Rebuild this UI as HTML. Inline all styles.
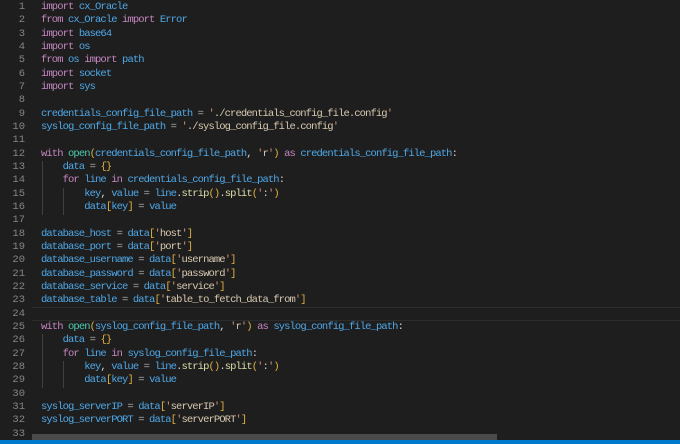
<!DOCTYPE html>
<html><head><meta charset="utf-8"><style>
html,body{margin:0;padding:0;background:#1e1e1e;width:680px;height:444px;overflow:hidden;position:relative}
.ed{position:absolute;left:0;top:1px;width:680px;font-family:"Liberation Mono",monospace;font-size:10.5px;letter-spacing:-0.9px;line-height:13.33px;color:#d4d4d4}
.l{position:relative;height:13.33px}
.n{position:absolute;left:0;width:25px;text-align:right;color:#858585;letter-spacing:0}
.c{position:absolute;left:41px;white-space:pre}
.k{color:#c586c0}.v{color:#4fa8e8}.f{color:#4ec9b0}.m{color:#dcdcaa}.s{color:#d8c8b0}.q{color:#ce9178}.o{color:#aaa}.b{color:#e0b040}
.cur{position:absolute;left:32px;right:0;top:307px;height:12px;border-top:1px solid #2c2c2c;border-bottom:1px solid #2c2c2c}
.g{position:absolute;width:1px;background:#404040}
</style></head><body>
<div class="cur"></div>
<div class="g" style="left:42px;top:161px;height:54px"></div>
<div class="g" style="left:63px;top:188px;height:27px"></div>
<div class="g" style="left:42px;top:334px;height:54px"></div>
<div class="g" style="left:63px;top:361px;height:27px"></div>
<div class="ed"><div class="l"><span class="n">1</span><span class="c"><span class="k">import</span> <span class="v">cx_Oracle</span></span></div><div class="l"><span class="n">2</span><span class="c"><span class="k">from</span> <span class="v">cx_Oracle</span> <span class="k">import</span> <span class="v">Error</span></span></div><div class="l"><span class="n">3</span><span class="c"><span class="k">import</span> <span class="v">base64</span></span></div><div class="l"><span class="n">4</span><span class="c"><span class="k">import</span> <span class="v">os</span></span></div><div class="l"><span class="n">5</span><span class="c"><span class="k">from</span> <span class="v">os</span> <span class="k">import</span> <span class="v">path</span></span></div><div class="l"><span class="n">6</span><span class="c"><span class="k">import</span> <span class="v">socket</span></span></div><div class="l"><span class="n">7</span><span class="c"><span class="k">import</span> <span class="v">sys</span></span></div><div class="l"><span class="n">8</span></div><div class="l"><span class="n">9</span><span class="c"><span class="v">credentials_config_file_path</span> <span class="o">=</span> <span class="q">'</span><span class="s">./credentials_config_file.config</span><span class="q">'</span></span></div><div class="l"><span class="n">10</span><span class="c"><span class="v">syslog_config_file_path</span> <span class="o">=</span> <span class="q">'</span><span class="s">./syslog_config_file.config</span><span class="q">'</span></span></div><div class="l"><span class="n">11</span></div><div class="l"><span class="n">12</span><span class="c"><span class="k">with</span> <span class="f">open</span><span class="b">(</span><span class="v">credentials_config_file_path</span>, <span class="q">'</span><span class="s">r</span><span class="q">'</span><span class="b">)</span> <span class="k">as</span> <span class="v">credentials_config_file_path</span>:</span></div><div class="l"><span class="n">13</span><span class="c">    <span class="v">data</span> <span class="o">=</span> <span class="b">{}</span></span></div><div class="l"><span class="n">14</span><span class="c">    <span class="k">for</span> <span class="v">line</span> <span class="k">in</span> <span class="v">credentials_config_file_path</span>:</span></div><div class="l"><span class="n">15</span><span class="c">        <span class="v">key</span>, <span class="v">value</span> <span class="o">=</span> <span class="v">line</span>.<span class="m">strip</span><span class="b">()</span>.<span class="m">split</span><span class="b">(</span><span class="q">'</span><span class="s">:</span><span class="q">'</span><span class="b">)</span></span></div><div class="l"><span class="n">16</span><span class="c">        <span class="v">data</span><span class="b">[</span><span class="v">key</span><span class="b">]</span> <span class="o">=</span> <span class="v">value</span></span></div><div class="l"><span class="n">17</span></div><div class="l"><span class="n">18</span><span class="c"><span class="v">database_host</span> <span class="o">=</span> <span class="v">data</span><span class="b">[</span><span class="q">'</span><span class="s">host</span><span class="q">'</span><span class="b">]</span></span></div><div class="l"><span class="n">19</span><span class="c"><span class="v">database_port</span> <span class="o">=</span> <span class="v">data</span><span class="b">[</span><span class="q">'</span><span class="s">port</span><span class="q">'</span><span class="b">]</span></span></div><div class="l"><span class="n">20</span><span class="c"><span class="v">database_username</span> <span class="o">=</span> <span class="v">data</span><span class="b">[</span><span class="q">'</span><span class="s">username</span><span class="q">'</span><span class="b">]</span></span></div><div class="l"><span class="n">21</span><span class="c"><span class="v">database_password</span> <span class="o">=</span> <span class="v">data</span><span class="b">[</span><span class="q">'</span><span class="s">password</span><span class="q">'</span><span class="b">]</span></span></div><div class="l"><span class="n">22</span><span class="c"><span class="v">database_service</span> <span class="o">=</span> <span class="v">data</span><span class="b">[</span><span class="q">'</span><span class="s">service</span><span class="q">'</span><span class="b">]</span></span></div><div class="l"><span class="n">23</span><span class="c"><span class="v">database_table</span> <span class="o">=</span> <span class="v">data</span><span class="b">[</span><span class="q">'</span><span class="s">table_to_fetch_data_from</span><span class="q">'</span><span class="b">]</span></span></div><div class="l"><span class="n">24</span></div><div class="l"><span class="n">25</span><span class="c"><span class="k">with</span> <span class="f">open</span><span class="b">(</span><span class="v">syslog_config_file_path</span>, <span class="q">'</span><span class="s">r</span><span class="q">'</span><span class="b">)</span> <span class="k">as</span> <span class="v">syslog_config_file_path</span>:</span></div><div class="l"><span class="n">26</span><span class="c">    <span class="v">data</span> <span class="o">=</span> <span class="b">{}</span></span></div><div class="l"><span class="n">27</span><span class="c">    <span class="k">for</span> <span class="v">line</span> <span class="k">in</span> <span class="v">syslog_config_file_path</span>:</span></div><div class="l"><span class="n">28</span><span class="c">        <span class="v">key</span>, <span class="v">value</span> <span class="o">=</span> <span class="v">line</span>.<span class="m">strip</span><span class="b">()</span>.<span class="m">split</span><span class="b">(</span><span class="q">'</span><span class="s">:</span><span class="q">'</span><span class="b">)</span></span></div><div class="l"><span class="n">29</span><span class="c">        <span class="v">data</span><span class="b">[</span><span class="v">key</span><span class="b">]</span> <span class="o">=</span> <span class="v">value</span></span></div><div class="l"><span class="n">30</span></div><div class="l"><span class="n">31</span><span class="c"><span class="v">syslog_serverIP</span> <span class="o">=</span> <span class="v">data</span><span class="b">[</span><span class="q">'</span><span class="s">serverIP</span><span class="q">'</span><span class="b">]</span></span></div><div class="l"><span class="n">32</span><span class="c"><span class="v">syslog_serverPORT</span> <span class="o">=</span> <span class="v">data</span><span class="b">[</span><span class="q">'</span><span class="s">serverPORT</span><span class="q">'</span><span class="b">]</span></span></div><div class="l"><span class="n">33</span></div></div>
<div style="position:absolute;left:32px;width:465px;top:434px;height:6px;background:#4a4a4a"></div>
<div style="position:absolute;left:0;right:0;top:440px;height:4px;background:#007acc"></div>
</body></html>
